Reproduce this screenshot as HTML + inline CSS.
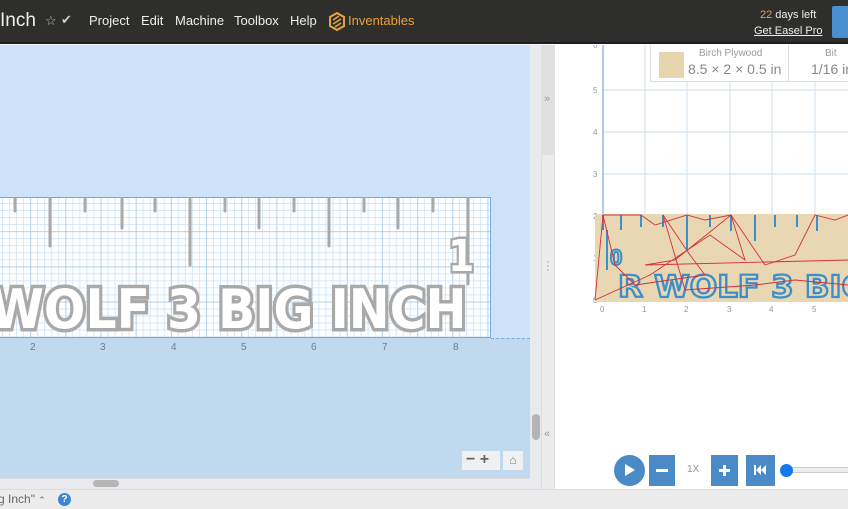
<!DOCTYPE html>
<html><head><meta charset="utf-8"><style>
*{margin:0;padding:0;box-sizing:border-box}
body{width:848px;height:509px;overflow:hidden;position:relative;font-family:"Liberation Sans",sans-serif;background:#fff}
.a{position:absolute}
#hdr{left:0;top:0;width:848px;height:44px;background:#2e2e2d;border-bottom:2px solid #1e1e1e;color:#eee}
#hdr span{position:absolute;top:13px;font-size:13px}
#left{left:0;top:45px;width:530px;height:433px;background:#cde3f9}
#lowbg{left:0;top:338px;width:530px;height:140px;background:#c0d9ef}
#ruler{left:-2px;top:197px;width:493px;height:141px;border:1px solid #7aa9d8;border-left:none;
background-color:#fdfeff;
background-image:linear-gradient(90deg,rgba(140,185,225,.45) 1px,transparent 1px),linear-gradient(rgba(140,185,225,.45) 1px,transparent 1px),linear-gradient(90deg,rgba(200,222,242,.7) 1px,transparent 1px),linear-gradient(rgba(200,222,242,.7) 1px,transparent 1px);
background-size:35.2px 35.2px,35.2px 35.2px,7.04px 7.04px,7.04px 7.04px;background-position:-3px 0,0 -2px,-3px 0,0 -2px}
.ax{font-size:10px;color:#6a7f95;top:342px}
#big{left:-10px;top:278px;font-size:54px;font-weight:900;font-family:"DejaVu Sans","Liberation Sans",sans-serif;color:#fff;-webkit-text-stroke:7px #a9a9a9;paint-order:stroke fill;letter-spacing:0;white-space:nowrap;transform:scaleX(0.905);transform-origin:left}
</style></head><body>
<div id="hdr" class="a">
<span style="left:0;top:10px;font-size:19px">Inch</span>
<span style="left:45px;top:13px;color:#bbb">☆</span><span style="left:61px;top:12px;color:#ccc">✔</span>
<span style="left:89px">Project</span><span style="left:141px">Edit</span><span style="left:175px">Machine</span><span style="left:234px">Toolbox</span><span style="left:290px">Help</span>
<svg class="a" style="left:329px;top:12px" width="16" height="19" viewBox="0 0 16 19"><path d="M8 1 L15 5 V14 L8 18 L1 14 V5 Z" fill="none" stroke="#e8a33a" stroke-width="2"/><path d="M4 8 L10 4 M4 12 L12 7 M6 15 L12 11" stroke="#e8a33a" stroke-width="1.6"/></svg>
<span style="left:348px;color:#e8a33a">Inventables</span>
<span style="left:760px;top:9px;font-size:11px"><b style="color:#e8a33a;font-weight:normal">22</b> days left</span>
<span style="left:754px;top:25px;font-size:11px;text-decoration:underline">Get Easel Pro</span>
<div class="a" style="left:832px;top:6px;width:20px;height:32px;background:#4a8fcf;border-radius:2px"></div>
</div>
<div id="left" class="a"></div>
<div id="lowbg" class="a"></div>
<div class="a" style="left:491px;top:338px;width:39px;border-top:1px dashed #7aa9d8"></div>
<div id="ruler" class="a"></div>
<svg class="a" style="left:0;top:197px" width="491" height="100">
<g stroke="#a9a9a9" stroke-width="3" stroke-linecap="round">
<line x1="15" y1="2" x2="15" y2="14"/><line x1="50" y1="2" x2="50" y2="49"/><line x1="85" y1="2" x2="85" y2="14"/><line x1="122" y1="2" x2="122" y2="31"/><line x1="155" y1="2" x2="155" y2="14"/><line x1="190" y1="2" x2="190" y2="68"/><line x1="225" y1="2" x2="225" y2="14"/><line x1="259" y1="2" x2="259" y2="31"/><line x1="294" y1="2" x2="294" y2="14"/><line x1="329" y1="2" x2="329" y2="49"/><line x1="364" y1="2" x2="364" y2="14"/><line x1="398" y1="2" x2="398" y2="31"/><line x1="433" y1="2" x2="433" y2="14"/><line x1="468" y1="2" x2="468" y2="87"/>
</g></svg>
<div class="a" style="left:446px;top:231px;font-size:44px;font-weight:900;font-family:'DejaVu Sans',sans-serif;color:#fff;-webkit-text-stroke:5px #a9a9a9;paint-order:stroke fill;transform:scaleX(0.85)">1</div>
<div id="big" class="a">WOLF 3 BIG INCH</div>
<div class="a ax" style="left:30px">2</div><div class="a ax" style="left:100px">3</div><div class="a ax" style="left:171px">4</div><div class="a ax" style="left:241px">5</div><div class="a ax" style="left:311px">6</div><div class="a ax" style="left:382px">7</div><div class="a ax" style="left:453px">8</div>
<div class="a" style="left:462px;top:451px;width:38px;height:19px;background:#eef0f2;font-size:16px;color:#666;font-weight:bold;line-height:18px;padding-left:4px">−&nbsp;+</div>
<div class="a" style="left:503px;top:451px;width:20px;height:19px;background:#eef0f2;color:#777;font-size:12px;text-align:center;line-height:19px">⌂</div>
<div class="a" style="left:530px;top:45px;width:11px;height:444px;background:#e8eaed"></div>
<div class="a" style="left:532px;top:414px;width:8px;height:26px;background:#b5b5b5;border-radius:4px"></div>
<div class="a" style="left:0;top:478px;width:530px;height:11px;background:#e8eaee;border-top:1px solid #d8dade"></div>
<div class="a" style="left:93px;top:480px;width:26px;height:7px;background:#b5b5b5;border-radius:4px"></div>
<div class="a" style="left:541px;top:45px;width:14px;height:444px;background:#ececec;border-left:1px solid #ddd;border-right:1px solid #ddd"></div>
<div class="a" style="left:541px;top:45px;width:14px;height:110px;background:#e0e0e0"></div>
<div class="a" style="left:544px;top:93px;font-size:11px;color:#999">»</div>
<div class="a" style="left:546px;top:260px;font-size:11px;color:#888;line-height:4px">·<br>·<br>·</div>
<div class="a" style="left:544px;top:428px;font-size:11px;color:#999">«</div>
<svg class="a" style="left:555px;top:45px" width="293" height="270" font-family="Liberation Sans" font-size="8" fill="#8899aa">
<g stroke="#d7e5f2" stroke-width="1.2">
<line x1="48" y1="45" x2="293" y2="45"/><line x1="48" y1="87" x2="293" y2="87"/><line x1="48" y1="129" x2="293" y2="129"/><line x1="48" y1="171" x2="293" y2="171"/>
<line x1="90" y1="0" x2="90" y2="255"/><line x1="132" y1="0" x2="132" y2="255"/><line x1="175" y1="0" x2="175" y2="255"/><line x1="217" y1="0" x2="217" y2="255"/><line x1="260" y1="0" x2="260" y2="255"/></g>
<line x1="48" y1="0" x2="48" y2="255" stroke="#9cbad6" stroke-width="1.5"/>
<text x="38" y="3">6</text><text x="38" y="48">5</text><text x="38" y="90">4</text><text x="38" y="132">3</text><text x="38" y="174">2</text><text x="38" y="216">1</text><text x="38" y="258">0</text>
<rect x="40" y="169" width="253" height="88" fill="#e9d6b2"/>
<g stroke="#3c8fca" stroke-width="2"><line x1="48" y1="170" x2="48" y2="185"/><line x1="66" y1="170" x2="66" y2="185"/><line x1="86" y1="170" x2="86" y2="182"/><line x1="108" y1="170" x2="108" y2="182"/><line x1="132" y1="170" x2="132" y2="205"/><line x1="155" y1="170" x2="155" y2="182"/><line x1="176" y1="170" x2="176" y2="186"/><line x1="200" y1="170" x2="200" y2="196"/><line x1="220" y1="170" x2="220" y2="182"/><line x1="242" y1="170" x2="242" y2="182"/><line x1="262" y1="170" x2="262" y2="186"/><line x1="52" y1="185" x2="52" y2="225"/></g>
<text x="55" y="220" font-size="22" font-weight="bold" fill="none" stroke="#3c8fca" stroke-width="2">0</text>
<text x="63" y="252" font-size="30" font-weight="900" font-family="DejaVu Sans" fill="none" stroke="#3c8fca" stroke-width="2.2" textLength="250" lengthAdjust="spacingAndGlyphs">R WOLF 3 BIG</text>
<polyline fill="none" stroke="#d2313a" stroke-width="0.9" points="40,255 48,170 66,170 86,170 100,180 132,170 150,175 176,170 210,220 240,210 260,170 280,175 293,170"/>
<polyline fill="none" stroke="#d2313a" stroke-width="0.9" points="48,170 60,220 80,240 150,230 135,210 108,170 130,245 200,240 240,235 293,240"/>
<polyline fill="none" stroke="#d2313a" stroke-width="0.9" points="40,255 95,230 155,190 190,215 176,170 120,215 90,220 293,215"/>
</svg>
<div class="a" style="left:553px;top:305px;width:295px;font-size:8px;color:#8899aa;font-family:'Liberation Sans'"><span class="a" style="left:47px">0</span><span class="a" style="left:89px">1</span><span class="a" style="left:131px">2</span><span class="a" style="left:174px">3</span><span class="a" style="left:216px">4</span><span class="a" style="left:259px">5</span></div>
<div class="a" style="left:650px;top:45px;width:200px;height:37px;background:#fff;border:1px solid #ddd;border-top:none"></div>
<div class="a" style="left:659px;top:52px;width:25px;height:26px;background:#e8d4ae"></div>
<div class="a" style="left:699px;top:48px;font-size:10px;color:#999">Birch Plywood</div>
<div class="a" style="left:688px;top:61px;font-size:14px;color:#888;white-space:nowrap">8.5 × 2 × 0.5 in</div>
<div class="a" style="left:788px;top:45px;width:1px;height:37px;background:#ddd"></div>
<div class="a" style="left:825px;top:48px;font-size:10px;color:#999">Bit</div>
<div class="a" style="left:811px;top:61px;font-size:14px;color:#888;white-space:nowrap">1/16 in</div>
<div class="a" style="left:614px;top:455px;width:31px;height:31px;border-radius:50%;background:#4a8ac6"></div>
<div class="a" style="left:625px;top:464px;width:0;height:0;border-left:10px solid #fff;border-top:6px solid transparent;border-bottom:6px solid transparent"></div>
<div class="a" style="left:649px;top:455px;width:26px;height:31px;background:#4a8ac6"></div>
<div class="a" style="left:656px;top:469px;width:12px;height:3px;background:#fff"></div>
<div class="a" style="left:687px;top:464px;font-size:10px;color:#999">1X</div>
<div class="a" style="left:711px;top:455px;width:27px;height:31px;background:#4a8ac6"></div>
<div class="a" style="left:719px;top:469px;width:11px;height:3px;background:#fff"></div><div class="a" style="left:723px;top:465px;width:3px;height:11px;background:#fff"></div>
<div class="a" style="left:746px;top:455px;width:29px;height:31px;background:#4a8ac6"></div>
<svg class="a" style="left:753px;top:464px" width="14" height="12"><rect x="1" y="1" width="2" height="10" fill="#fff"/><path d="M3 6 L8 1 V11 Z M8 6 L13 1 V11 Z" fill="#fff"/></svg>
<div class="a" style="left:790px;top:467px;width:60px;height:6px;background:#eee;border:1px solid #ccc"></div>
<div class="a" style="left:780px;top:464px;width:13px;height:13px;border-radius:50%;background:#1677ee"></div>
<div class="a" style="left:0;top:489px;width:848px;height:20px;background:#ececec;border-top:1px solid #ddd"></div>
<div class="a" style="left:-2px;top:492px;font-size:12px;color:#666">g Inch" <span style="font-size:9px">⌃</span></div>
<div class="a" style="left:58px;top:493px;width:13px;height:13px;border-radius:50%;background:#3d86cf;color:#fff;font-size:10px;font-weight:bold;text-align:center;line-height:13px">?</div>
</body></html>
